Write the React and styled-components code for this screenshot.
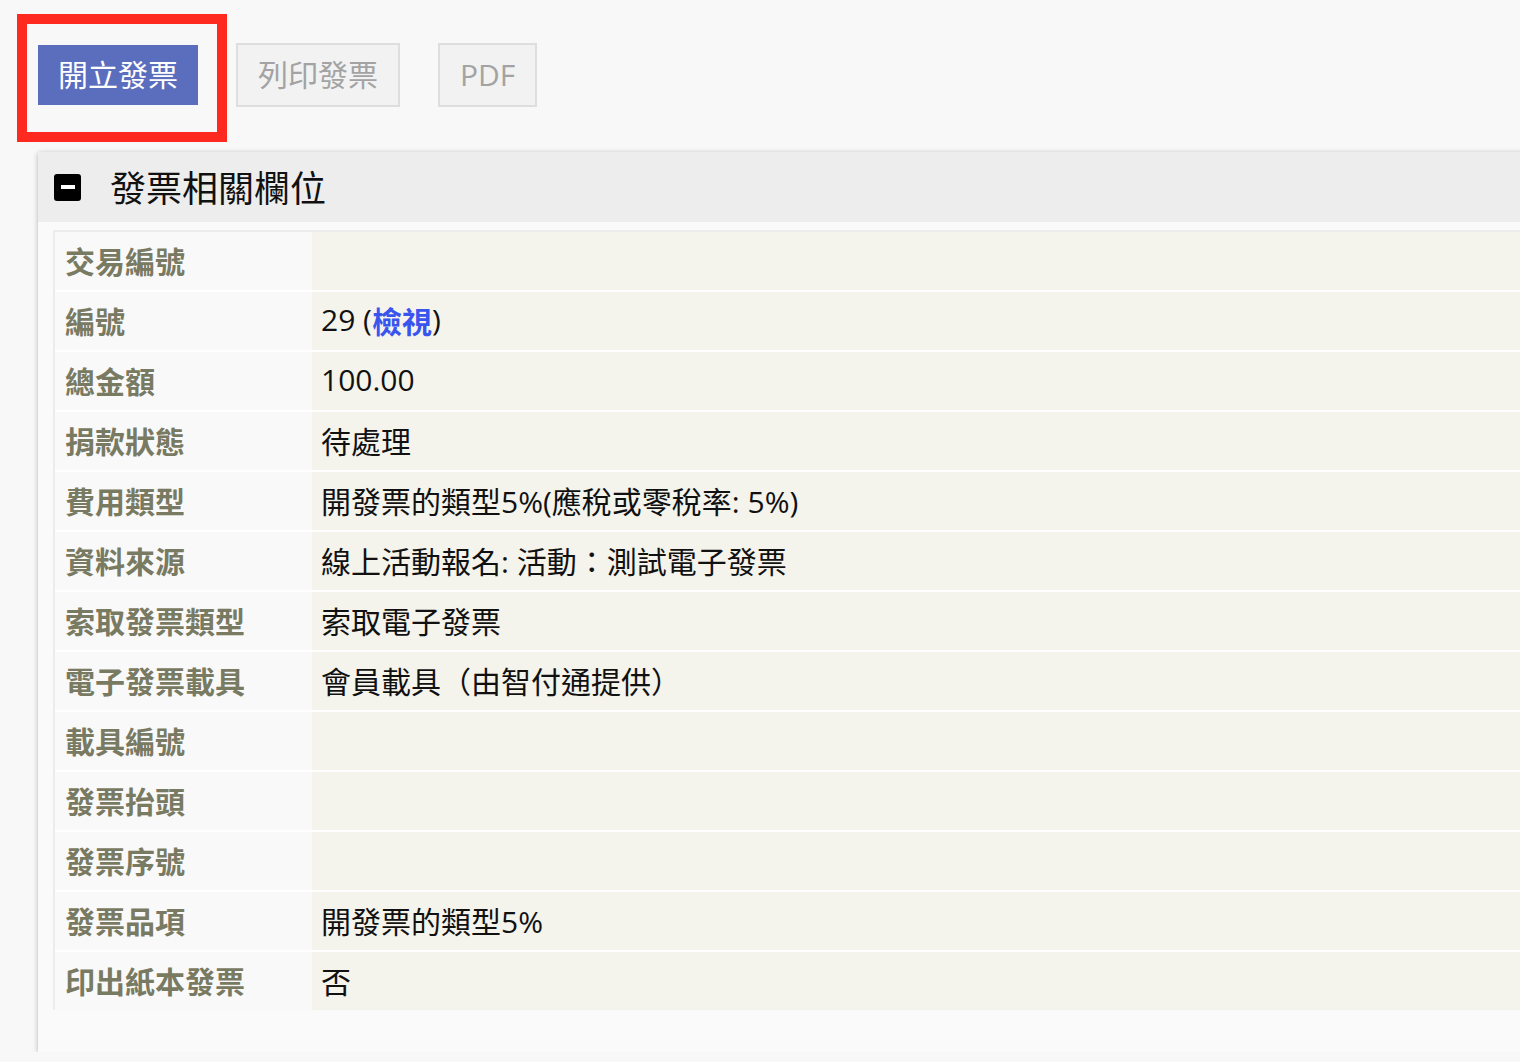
import React from "react";
import styled, { createGlobalStyle } from "styled-components";

const GlobalStyle = createGlobalStyle`
  html, body {
    margin: 0;
    padding: 0;
    background: #f8f8f8;
    overflow: hidden;
  }
  body {
    font-family: "Open Sans", "Noto Sans CJK TC", sans-serif;
  }
`;

const Page = styled.div`
  padding: 43px 0 0 38px;
`;

const Toolbar = styled.div`
  display: flex;
  align-items: center;
  gap: 38px;
`;

const Highlight = styled.span`
  position: relative;
  display: inline-flex;

  &::after {
    content: "";
    position: absolute;
    top: -31px;
    left: -21px;
    right: -29px;
    bottom: -37px;
    border: 10px solid #ff2a1f;
    pointer-events: none;
  }
`;

const Button = styled.button`
  font-family: "Open Sans", "Noto Sans CJK TC", sans-serif;
  font-size: 30px;
  line-height: 1;
  padding: 0 20px;
  height: ${(p) => (p.$primary ? "60px" : "64px")};
  border: ${(p) => (p.$primary ? "none" : "2px solid #dedede")};
  background: ${(p) => (p.$primary ? "#5b6ebe" : "#f2f2f2")};
  color: ${(p) => (p.$primary ? "#ffffff" : "#a3a3a3")};
  cursor: pointer;
`;

const Panel = styled.section`
  margin-top: 45px;
  margin-right: -60px;
  background: #fafafa;
  box-shadow: 0 1px 5px rgba(0, 0, 0, 0.28);
  padding-bottom: 42px;
`;

const PanelHeader = styled.div`
  display: flex;
  align-items: center;
  gap: 29px;
  height: 70px;
  padding-left: 16px;
  background: #ededed;
`;

const Toggle = styled.span`
  width: 27px;
  height: 27px;
  border-radius: 3px;
  background: #000;
  display: flex;
  align-items: center;
  justify-content: center;

  &::before {
    content: "";
    width: 14px;
    height: 4px;
    background: #fff;
  }
`;

const Title = styled.h2`
  margin: 0 0 3px;
  font-family: "Noto Sans CJK TC", sans-serif;
  font-weight: 400;
  font-size: 36px;
  color: #111;
`;

const Table = styled.div`
  margin: 8px 0 0 15px;
  border-top: 2px solid #ececec;
  border-left: 2px solid #ececec;
`;

const Row = styled.div`
  display: grid;
  grid-template-columns: 257px 1fr;
  height: 58px;
  border-bottom: 2px solid #ffffff;
  &:last-child {
    border-bottom: none;
  }
`;

const Label = styled.div`
  display: flex;
  align-items: center;
  padding: 0 0 3px 10px;
  background: #f9f9f9;
  color: #797a62;
  font-weight: 700;
  font-size: 30px;
  font-family: "Noto Sans CJK TC", sans-serif;
`;

const Value = styled.div`
  display: flex;
  align-items: center;
  padding: 0 0 3px 9px;
  background: #f4f3ec;
  color: #111;
  font-size: 30px;
  white-space: pre;
`;

const Link = styled.a`
  color: #3a55ee;
  font-weight: 700;
  text-decoration: none;
  font-family: "Noto Sans CJK TC", sans-serif;
`;

const rows = [
  ["交易編號", ""],
  [
    "編號",
    <>
      29 (<Link href="#">檢視</Link>)
    </>,
  ],
  ["總金額", "100.00"],
  ["捐款狀態", "待處理"],
  ["費用類型", "開發票的類型5%(應稅或零稅率: 5%)"],
  ["資料來源", "線上活動報名: 活動：測試電子發票"],
  ["索取發票類型", "索取電子發票"],
  ["電子發票載具", "會員載具（由智付通提供）"],
  ["載具編號", ""],
  ["發票抬頭", ""],
  ["發票序號", ""],
  ["發票品項", "開發票的類型5%"],
  ["印出紙本發票", "否"],
];

export default function App() {
  return (
    <Page>
      <GlobalStyle />
      <Toolbar>
        <Highlight>
          <Button $primary>開立發票</Button>
        </Highlight>
        <Button>列印發票</Button>
        <Button>PDF</Button>
      </Toolbar>
      <Panel>
        <PanelHeader>
          <Toggle />
          <Title>發票相關欄位</Title>
        </PanelHeader>
        <Table>
          {rows.map(([label, value]) => (
            <Row key={label}>
              <Label>{label}</Label>
              <Value>{value}</Value>
            </Row>
          ))}
        </Table>
      </Panel>
    </Page>
  );
}
